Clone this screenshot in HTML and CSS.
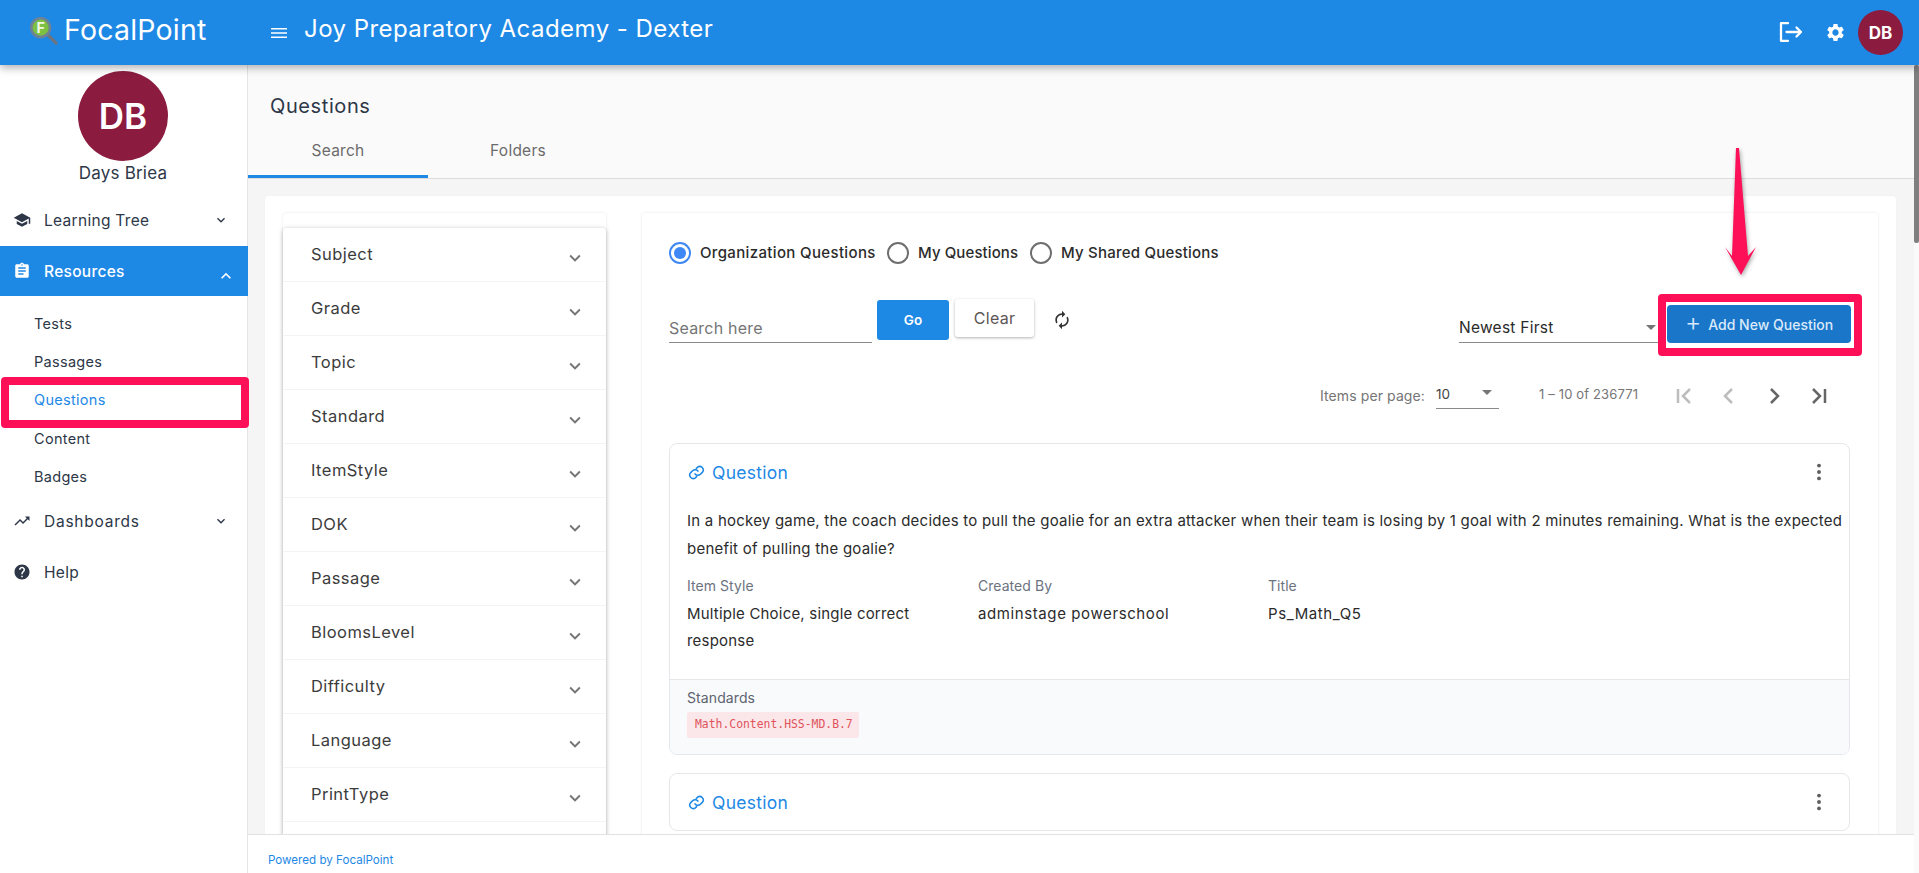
FILE: index.html
```html
<!DOCTYPE html>
<html lang="en">
<head>
<meta charset="utf-8">
<title>Questions - FocalPoint</title>
<link rel="stylesheet" href="styles.css">
</head>
<body>
<svg class="defs" aria-hidden="true">
  <symbol id="i-school" viewBox="0 0 24 24"><path d="M5 13.18v4L12 21l7-3.82v-4L12 17l-7-3.82zM12 3L1 9l11 6 9-4.91V17h2V9L12 3z"/></symbol>
  <symbol id="i-assign" viewBox="0 0 24 24"><path d="M19 3h-4.18C14.4 1.84 13.3 1 12 1c-1.3 0-2.4.84-2.82 2H5c-1.1 0-2 .9-2 2v14c0 1.1.9 2 2 2h14c1.1 0 2-.9 2-2V5c0-1.1-.9-2-2-2zm-7 0c.55 0 1 .45 1 1s-.45 1-1 1-1-.45-1-1 .45-1 1-1zm2 14H7v-2h7v2zm3-4H7v-2h10v2zm0-4H7V7h10v2z"/></symbol>
  <symbol id="i-trend" viewBox="0 0 24 24"><path d="M16 6l2.29 2.29-4.88 4.88-4-4L2 16.59 3.41 18l6-6 4 4 6.3-6.29L22 12V6z"/></symbol>
  <symbol id="i-help" viewBox="0 0 24 24"><path d="M12 2C6.48 2 2 6.48 2 12s4.48 10 10 10 10-4.48 10-10S17.52 2 12 2zm1 17h-2v-2h2v2zm2.07-7.75l-.9.92C13.45 12.9 13 13.5 13 15h-2v-.5c0-1.1.45-2.1 1.17-2.83l1.24-1.26c.37-.36.59-.86.59-1.41 0-1.1-.9-2-2-2s-2 .9-2 2H8c0-2.21 1.79-4 4-4s4 1.79 4 4c0 .88-.36 1.68-.93 2.25z"/></symbol>
  <symbol id="i-gear" viewBox="0 0 24 24"><path d="M19.14 12.94c.04-.3.06-.61.06-.94 0-.32-.02-.64-.07-.94l2.03-1.58c.18-.14.23-.41.12-.61l-1.92-3.32c-.12-.22-.37-.29-.59-.22l-2.39.96c-.5-.38-1.03-.7-1.62-.94l-.36-2.54c-.04-.24-.24-.41-.48-.41h-3.84c-.24 0-.43.17-.47.41l-.36 2.54c-.59.24-1.13.57-1.62.94l-2.39-.96c-.22-.08-.47 0-.59.22L2.74 8.87c-.12.21-.08.47.12.61l2.03 1.58c-.05.3-.09.63-.09.94s.02.64.07.94l-2.03 1.58c-.18.14-.23.41-.12.61l1.92 3.32c.12.22.37.29.59.22l2.39-.96c.5.38 1.03.7 1.62.94l.36 2.54c.05.24.24.41.48.41h3.84c.24 0 .44-.17.47-.41l.36-2.54c.59-.24 1.13-.56 1.62-.94l2.39.96c.22.08.47 0 .59-.22l1.92-3.32c.12-.22.07-.47-.12-.61l-2.01-1.58zM12 15.6c-1.98 0-3.6-1.62-3.6-3.6s1.62-3.6 3.6-3.6 3.6 1.62 3.6 3.6-1.62 3.6-3.6 3.6z"/></symbol>
  <symbol id="i-renew" viewBox="0 0 24 24"><path d="M12 6v3l4-4-4-4v3c-4.42 0-8 3.58-8 8 0 1.57.46 3.03 1.24 4.26L6.7 14.8c-.45-.83-.7-1.79-.7-2.8 0-3.31 2.69-6 6-6zm6.76 1.74L17.3 9.2c.44.84.7 1.79.7 2.8 0 3.31-2.69 6-6 6v-3l-4 4 4 4v-3c4.42 0 8-3.58 8-8 0-1.57-.46-3.03-1.24-4.26z"/></symbol>
  <symbol id="i-down" viewBox="0 0 24 24"><path d="M7.41 8.59L12 13.17l4.59-4.58L18 10l-6 6-6-6z"/></symbol>
  <symbol id="i-up" viewBox="0 0 24 24"><path d="M7.41 15.41L12 10.83l4.59 4.58L18 14l-6-6-6 6z"/></symbol>
  <symbol id="i-link" viewBox="0 0 24 24"><path fill="none" stroke="currentColor" stroke-width="2.2" stroke-linecap="round" stroke-linejoin="round" d="M10 14a5 5 0 0 0 7.5.5l3-3a5 5 0 0 0-7-7l-1.7 1.7M14 10a5 5 0 0 0-7.5-.5l-3 3a5 5 0 0 0 7 7l1.7-1.7"/></symbol>
  <symbol id="i-more" viewBox="0 0 24 24"><circle cx="12" cy="5" r="2.1"/><circle cx="12" cy="12" r="2.1"/><circle cx="12" cy="19" r="2.1"/></symbol>
</svg>

<div class="app">
  <header class="topbar">
    <div class="brand">
      <svg class="logo" viewBox="0 0 30 30" aria-hidden="true">
        <line x1="18" y1="18" x2="27" y2="27" stroke="#6c7480" stroke-width="3.4" stroke-linecap="round"/>
        <circle cx="11" cy="11" r="9.700" fill="#7cc142" stroke="#6d8296" stroke-width="2.800"/>
        <text class="logo-letter" x="11" y="16.500" text-anchor="middle">F</text>
      </svg>
      <span class="brand-name">FocalPoint</span>
    </div>
    <svg class="menu-icon" viewBox="0 0 16 12" aria-hidden="true"><path d="M0 1h16v1.4H0zM0 5.3h16v1.4H0zM0 9.6h16V11H0z"/></svg>
    <h1 class="org">Joy Preparatory Academy - Dexter</h1>
    <div class="top-actions">
      <svg class="logout" viewBox="0 0 24 20" aria-hidden="true"><path fill="none" stroke="#fff" stroke-width="2.3" stroke-linecap="round" stroke-linejoin="round" d="M9 1.200H2v17.600h7M7.500 10H22M17.500 5.500L22 10l-4.500 4.500"/></svg>
      <svg class="gear"><use href="#i-gear"/></svg>
      <span class="avatar-sm">DB</span>
    </div>
  </header>

  <div class="shell">
    <aside class="sidebar">
      <div class="profile">
        <div class="avatar-lg">DB</div>
        <div class="profile-name">Days Briea</div>
      </div>
      <nav class="nav">
        <div class="nav-item"><svg class="nav-icon"><use href="#i-school"/></svg><span>Learning Tree</span><svg class="nav-caret"><use href="#i-down"/></svg></div>
        <div class="nav-item active"><svg class="nav-icon"><use href="#i-assign"/></svg><span>Resources</span><svg class="nav-caret up"><use href="#i-up"/></svg></div>
        <div class="subnav">
          <div class="sub-item">Tests</div>
          <div class="sub-item">Passages</div>
          <div class="sub-item current">Questions<span class="hl hl-nav"></span></div>
          <div class="sub-item">Content</div>
          <div class="sub-item">Badges</div>
        </div>
        <div class="nav-item dash"><svg class="nav-icon"><use href="#i-trend"/></svg><span>Dashboards</span><svg class="nav-caret"><use href="#i-down"/></svg></div>
        <div class="nav-item help"><svg class="nav-icon"><use href="#i-help"/></svg><span>Help</span></div>
      </nav>
    </aside>

    <div class="main">
      <div class="page-head">
        <h2 class="page-title">Questions</h2>
        <div class="tabs">
          <div class="tab on">Search</div>
          <div class="tab">Folders</div>
        </div>
      </div>

      <div class="content">
        <div class="panel">
          <section class="filters">
            <div class="acc">
              <div class="acc-row"><span>Subject</span><svg class="acc-caret"><use href="#i-down"/></svg></div>
              <div class="acc-row"><span>Grade</span><svg class="acc-caret"><use href="#i-down"/></svg></div>
              <div class="acc-row"><span>Topic</span><svg class="acc-caret"><use href="#i-down"/></svg></div>
              <div class="acc-row"><span>Standard</span><svg class="acc-caret"><use href="#i-down"/></svg></div>
              <div class="acc-row"><span>ItemStyle</span><svg class="acc-caret"><use href="#i-down"/></svg></div>
              <div class="acc-row"><span>DOK</span><svg class="acc-caret"><use href="#i-down"/></svg></div>
              <div class="acc-row"><span>Passage</span><svg class="acc-caret"><use href="#i-down"/></svg></div>
              <div class="acc-row"><span>BloomsLevel</span><svg class="acc-caret"><use href="#i-down"/></svg></div>
              <div class="acc-row"><span>Difficulty</span><svg class="acc-caret"><use href="#i-down"/></svg></div>
              <div class="acc-row"><span>Language</span><svg class="acc-caret"><use href="#i-down"/></svg></div>
              <div class="acc-row"><span>PrintType</span><svg class="acc-caret"><use href="#i-down"/></svg></div>
              <div class="acc-row"></div>
            </div>
          </section>

          <section class="results">
            <div class="radios">
              <label class="radio"><span class="dot on"></span><span class="r1">Organization Questions</span></label>
              <label class="radio"><span class="dot"></span><span class="r2">My Questions</span></label>
              <label class="radio"><span class="dot"></span><span class="r3">My Shared Questions</span></label>
            </div>

            <div class="toolbar">
              <div class="search">Search here</div>
              <button class="btn-go" type="button">Go</button>
              <button class="btn-clear" type="button">Clear</button>
              <svg class="renew"><use href="#i-renew"/></svg>
              <div class="sort"><span>Newest First</span><i class="tri"></i></div>
              <div class="add-wrap">
                <button class="btn-add" type="button"><span class="plus">+</span><span>Add New Question</span></button>
                <span class="hl hl-add"></span>
              </div>
            </div>

            <div class="pager">
              <span class="pg-label">Items per page:</span>
              <div class="pg-size"><span>10</span><i class="tri"></i></div>
              <span class="pg-range">1 – 10 of 236771</span>
              <svg class="pg-btn dim" viewBox="0 0 24 24"><path d="M6 5v14M18 5l-7 7 7 7"/></svg>
              <svg class="pg-btn dim" viewBox="0 0 24 24"><path d="M15 5l-7 7 7 7"/></svg>
              <svg class="pg-btn" viewBox="0 0 24 24"><path d="M9 5l7 7-7 7"/></svg>
              <svg class="pg-btn" viewBox="0 0 24 24"><path d="M6 5l7 7-7 7M18 5v14"/></svg>
            </div>

            <article class="qcard">
              <div class="q-head">
                <svg class="q-link"><use href="#i-link"/></svg><span class="q-title">Question</span>
                <svg class="q-more"><use href="#i-more"/></svg>
              </div>
              <p class="q-text">In a hockey game, the coach decides to pull the goalie for an extra attacker when their team is losing by 1 goal with 2 minutes remaining. What is the expected benefit of pulling the goalie?</p>
              <div class="q-meta">
                <div><div class="m-label">Item Style</div><div class="m-val">Multiple Choice, single correct response</div></div>
                <div><div class="m-label">Created By</div><div class="m-val wide">adminstage powerschool</div></div>
                <div><div class="m-label">Title</div><div class="m-val wide">Ps_Math_Q5</div></div>
              </div>
              <div class="q-foot">
                <div class="f-label">Standards</div>
                <code class="chip">Math.Content.HSS-MD.B.7</code>
              </div>
            </article>

            <article class="qcard">
              <div class="q-head">
                <svg class="q-link"><use href="#i-link"/></svg><span class="q-title">Question</span>
                <svg class="q-more"><use href="#i-more"/></svg>
              </div>
            </article>
          </section>
        </div>
      </div>

      <footer class="foot">Powered by FocalPoint</footer>
    </div>

    <div class="scrollbar"><div class="thumb"></div></div>
  </div>

  <svg class="arrow" viewBox="0 0 40 134" aria-hidden="true">
    <path d="M15 2L18 2L27 110L35 101L20 129L4 101L11 110Z"/>
  </svg>
</div>
</body>
</html>
```
FILE: styles.css
```css
* { box-sizing: border-box; }
html, body { margin: 0; height: 100%; overflow: hidden; }
body { font-family: Inter, "Noto Sans", sans-serif; color: #2d3748; background: #fff; }
.defs { display: none; }
svg { display: block; flex: none; }
h1, h2, p { margin: 0; font-weight: 400; }
button { font-family: inherit; border: 0; padding: 0; }

.app { position: relative; height: 873px; display: flex; flex-direction: column; }

/* top bar */
.topbar { position: relative; z-index: 3; height: 65px; flex: none; background: #1e88e5; color: #fff; display: flex; align-items: center; box-shadow: 0 3px 8px rgba(0,0,0,.3); }
.brand { width: 271px; flex: none; padding-left: 30px; display: flex; align-items: center; gap: 5px; margin-top: -5px; }
.logo { width: 29px; height: 29px; margin-top: 3px; }
.logo-letter { font-family: Inter, sans-serif; font-size: 15px; font-weight: 700; fill: #f2f8e8; }
.brand-name { font-size: 28.500px; line-height: 32px; letter-spacing: .2px; }
.menu-icon { width: 16px; height: 12px; fill: #fff; margin-right: 17px; }
.org { font-size: 24px; line-height: 30px; letter-spacing: .45px; margin-top: -7px; }
.top-actions { margin-left: auto; display: flex; align-items: center; padding-right: 16px; }
.logout { width: 24px; height: 20px; margin-top: -1px; margin-right: 22px; }
.gear { width: 21px; height: 21px; fill: #fff; margin-right: 12px; }
.avatar-sm { width: 45px; height: 45px; border-radius: 50%; background: #8b1c40; font-size: 17px; font-weight: 700; display: flex; align-items: center; justify-content: center; }

.shell { flex: 1; min-height: 0; display: flex; }

/* sidebar */
.sidebar { width: 248px; flex: none; background: #fff; border-right: 1px solid #e4e4e4; position: relative; z-index: 2; }
.profile { height: 130px; padding: 6px 1px 0 0; display: flex; flex-direction: column; align-items: center; }
.avatar-lg { width: 90px; height: 90px; border-radius: 50%; background: #8b1c40; color: #fff; font-size: 35px; font-weight: 600; display: flex; align-items: center; justify-content: center; }
.profile-name { font-size: 17px; line-height: 24px; letter-spacing: .2px; color: #2d3748; }
.nav-item { height: 50px; display: flex; align-items: center; padding-left: 13px; font-size: 15.500px; letter-spacing: .3px; margin-right: -1px; position: relative; }
.nav-item.active { margin-top: 1px; background: #1e88e5; color: #fff; font-weight: 500; }
.nav-item.dash { letter-spacing: .75px; }
.nav-item.help { margin-top: 1px; }
.nav-item .nav-icon { width: 18px; height: 18px; fill: #2d3748; margin-right: 13px; }
.nav-item.active .nav-icon { fill: #fff; }
.nav-caret { width: 16px; height: 16px; fill: #2d3748; margin-left: auto; margin-right: 19px; }
.nav-caret.up { width: 20px; height: 20px; fill: #fff; margin-right: 12px; margin-top: 9px; }
.subnav { padding: 8px 0 1px; }
.sub-item { position: relative; height: 38.300px; padding-left: 34px; display: flex; align-items: center; font-size: 14.500px; letter-spacing: .3px; color: #2d3748; }
.sub-item.current { color: #1e88e5; }

/* highlight frames */
.hl { position: absolute; border: 8px solid #fe1059; border-radius: 4px; pointer-events: none; }
.hl-nav { left: 1px; right: -2px; top: -4px; bottom: -9px; }
.hl-add { left: -9px; right: -11px; top: -11px; bottom: -13px; }

/* main */
.main { flex: 1; min-width: 0; display: flex; flex-direction: column; background: #f5f5f5; overflow: hidden; }
.page-head { flex: none; height: 114px; background: #fafafa; border-bottom: 1px solid #dcdcdc; padding-top: 26px; }
.page-title { font-size: 20px; line-height: 30px; letter-spacing: .6px; padding-left: 22px; color: #2d3748; font-weight: 400; }
.tabs { display: flex; margin-top: 9px; height: 48px; }
.tab { width: 180px; display: flex; align-items: center; justify-content: center; padding-bottom: 7px; font-size: 15.500px; letter-spacing: .25px; color: #6b6b6b; }
.tab.on { border-bottom: 3px solid #1e88e5; padding-bottom: 4px; height: 48px; }

.content { flex: 1; min-height: 0; overflow: hidden; padding: 17px 18px 0 17px; }
.panel { background: #fff; border-radius: 4px 4px 0 0; padding: 17px 18px 0; display: flex; gap: 36px; height: 700px; box-shadow: 0 0 2px rgba(0,0,0,.04); }

/* filters */
.filters { width: 323px; flex: none; padding-top: 15px; border-radius: 4px; box-shadow: 0 0 3px rgba(0,0,0,.1); }
.acc { border-radius: 4px; box-shadow: 0 1px 5px rgba(0,0,0,.28); }
.acc-row { height: 54px; display: flex; align-items: flex-start; padding: 13px 20px 0 28px; border-bottom: 1px solid #f4f4f4; font-size: 16.500px; line-height: 26px; letter-spacing: .45px; color: #3c3c3c; }
.acc-caret { width: 22px; height: 22px; fill: #757575; margin-left: auto; margin-top: 6px; }

/* results */
.results { flex: 1; min-width: 0; padding: 29px 28px 0 27px; border-radius: 4px; box-shadow: 0 0 3px rgba(0,0,0,.1); }
.radios { display: flex; height: 21px; align-items: center; }
.radio { display: flex; align-items: center; font-size: 15px; font-weight: 500; color: #2b2b2b; white-space: nowrap; }
.dot { width: 22px; height: 22px; border: 2px solid #6e6e6e; border-radius: 50%; margin-right: 9px; flex: none; position: relative; }
.dot.on { border-color: #3f87f5; }
.dot.on::after { content: ""; position: absolute; inset: 3px; border-radius: 50%; background: #3f87f5; }
.r1 { width: 187px; letter-spacing: .35px; }
.r2 { width: 112px; letter-spacing: .1px; }
.r3 { letter-spacing: .22px; }

.toolbar { margin-top: 36px; height: 44px; display: flex; align-items: flex-start; }
.search { width: 203px; height: 44px; padding-top: 19px; border-bottom: 1px solid #8a8a8a; font-size: 16px; line-height: 20px; letter-spacing: .2px; color: #757575; }
.btn-go { width: 72px; height: 40px; margin: 1px 0 0 5px; background: #1e88e5; color: #fff; border-radius: 3px; font-size: 13.500px; font-weight: 600; }
.btn-clear { width: 79px; height: 38px; margin-left: 6px; background: #fff; color: #5c5555; border-radius: 3px; font-size: 16px; letter-spacing: .3px; box-shadow: 0 1px 3px rgba(0,0,0,.3); }
.renew { width: 20px; height: 20px; fill: #333; margin: 11px 0 0 18px; }
.sort { margin-left: auto; width: 199px; height: 44px; padding-top: 19px; border-bottom: 1px solid #8a8a8a; display: flex; justify-content: space-between; font-size: 15.500px; line-height: 20px; letter-spacing: .25px; color: #2a2a2a; }
.tri { width: 0; height: 0; border-left: 5px solid transparent; border-right: 5px solid transparent; border-top: 5px solid #757575; margin: 7px 2px 0 0; }
.add-wrap { position: relative; margin: 6px -1px 0 9px; }
.btn-add { width: 184px; height: 38px; background: #1976c9; color: #dbeafa; border-radius: 4px; font-size: 14px; font-weight: 500; display: flex; align-items: center; justify-content: center; gap: 7px; }
.plus { font-size: 25px; font-weight: 300; line-height: 1; margin-top: -3px; }

.pager { margin-top: 30px; height: 44px; display: flex; align-items: center; font-size: 13px; color: #757575; }
.pg-label { margin-left: 651px; width: 116px; flex: none; font-size: 14px; letter-spacing: .1px; white-space: nowrap; }
.pg-size { width: 63px; flex: none; height: 26px; margin-top: 1px; border-bottom: 1px solid #8a8a8a; display: flex; justify-content: space-between; padding-right: 5px; font-size: 13.500px; line-height: 22px; color: #444; }
.pg-range { margin-left: 40px; width: 133px; flex: none; margin-top: -3px; letter-spacing: .15px; white-space: nowrap; }
.pg-btn { width: 24px; height: 24px; fill: none; stroke: #666; stroke-width: 2.500; margin-right: 21px; margin-top: 1px; }
.pg-btn:last-child { margin-right: 0; }
.pg-btn.dim { stroke: #bdbdbd; }

.qcard { margin-top: 26px; border: 1px solid #e5e7eb; border-radius: 8px; background: #fff; overflow: hidden; }
.qcard + .qcard { margin-top: 18px; }
.q-head { height: 56px; padding: 0 19px 0 18px; display: flex; align-items: center; color: #1e88e5; }
.q-link { width: 17px; height: 17px; margin-right: 8px; color: #1e88e5; }
.q-title { font-size: 17.500px; letter-spacing: .25px; margin-left: -1px; }
.q-more { width: 22px; height: 22px; margin-left: auto; fill: #5f5f5f; }
.q-text { padding: 7px 5px 0 17px; font-size: 15px; line-height: 28px; color: #2b2b2b; letter-spacing: .23px; }
.q-meta { padding: 12px 0 25px 17px; display: grid; grid-template-columns: 291px 290px 1fr; }
.m-label { font-size: 14px; line-height: 22px; letter-spacing: .05px; color: #6b7280; margin-bottom: 3px; }
.m-val { width: 250px; font-size: 15px; line-height: 27px; letter-spacing: .2px; color: #2b2b2b; }
.m-val.wide { letter-spacing: .6px; }
.q-foot { background: #f9fafb; border-top: 1px solid #e5e7eb; padding: 8px 17px 16px; height: 75px; }
.f-label { font-size: 14px; line-height: 20px; letter-spacing: .1px; color: #5d6470; margin-bottom: 4px; }
.chip { display: inline-block; height: 26px; padding: 0 6px 0 8px; border-radius: 2px; background: #fbe7e9; color: #e0535c; font-family: "DejaVu Sans Mono", "Liberation Mono", monospace; font-size: 11.400px; line-height: 25px; }

.foot { flex: none; height: 39px; background: #fff; border-top: 1px solid #e2e2e2; padding: 16px 0 0 20px; font-size: 11.600px; line-height: 18px; color: #1e88e5; }

/* page scrollbar */
.scrollbar { width: 5px; flex: none; background: #fafafa; }
.thumb { height: 178px; background: #7f7f7f; border-radius: 2px; }

/* call-out arrow */
.arrow { position: absolute; left: 1721px; top: 146px; width: 40px; height: 134px; overflow: visible; fill: #fe1059; filter: drop-shadow(1px 2px 2px rgba(0,0,0,.35)); z-index: 4; }
```
